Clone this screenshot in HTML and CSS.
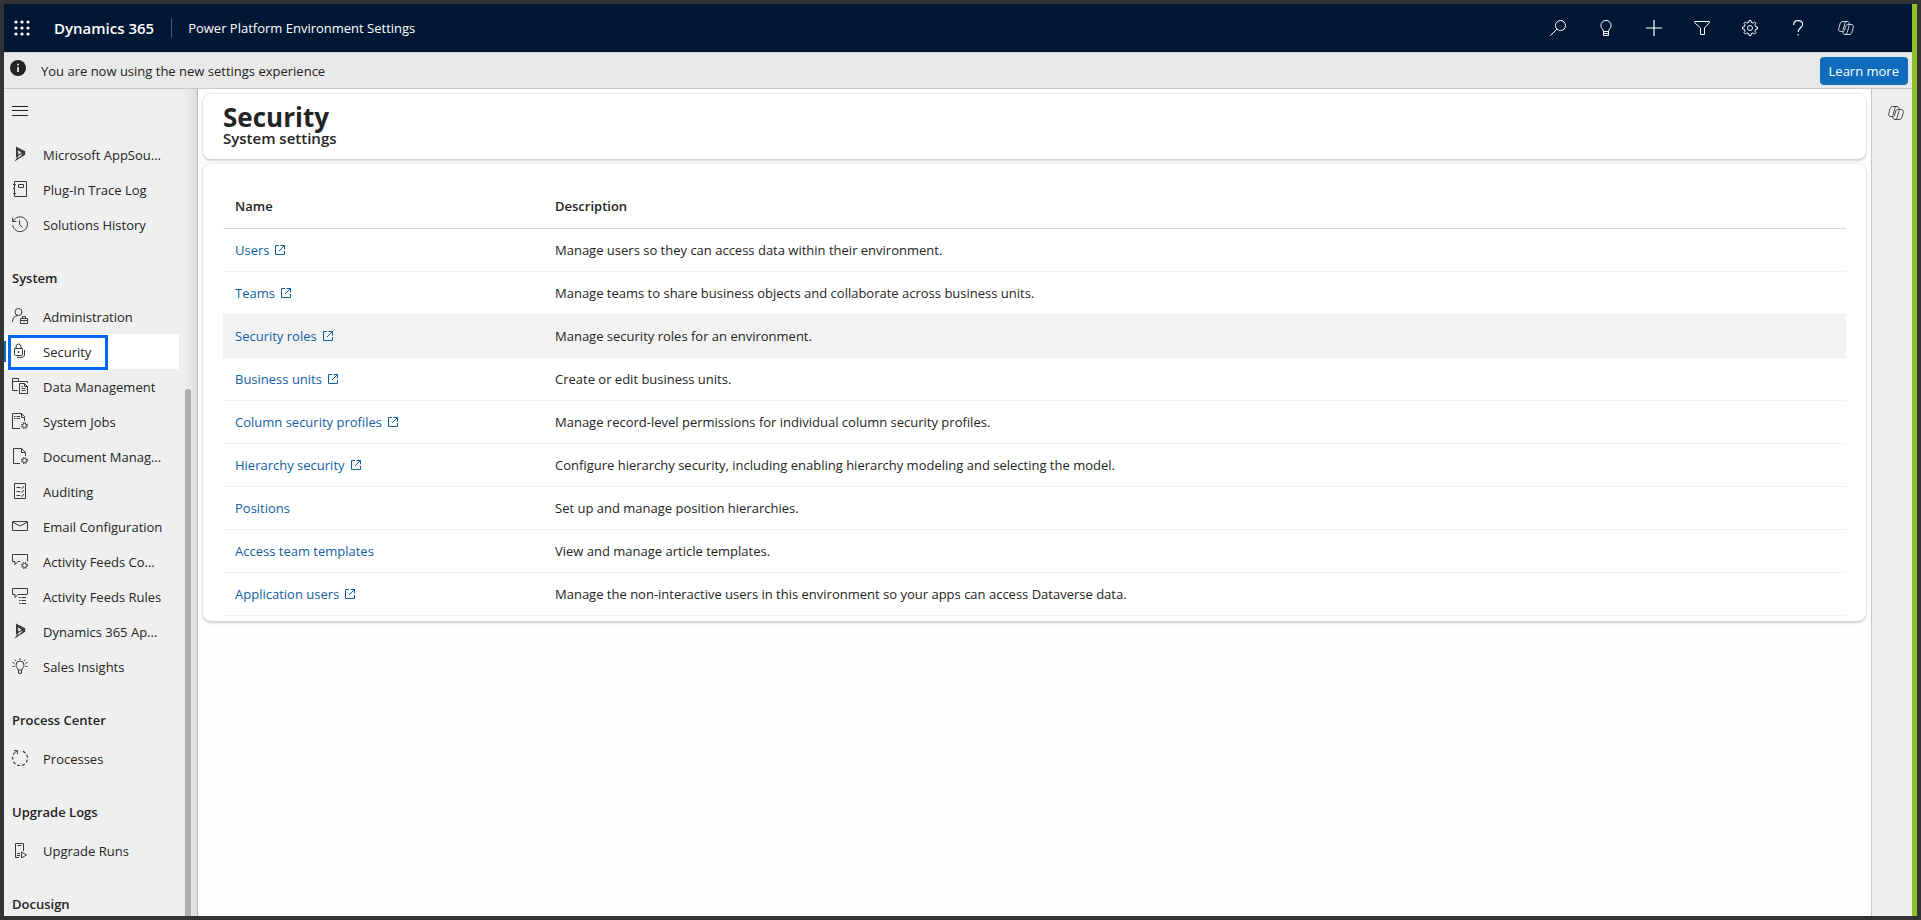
FILE: index.html
```html
<!DOCTYPE html>
<html lang="en">
<head>
<meta charset="utf-8">
<title>Security - Power Platform Environment Settings</title>
<link rel="stylesheet" href="styles.css">
</head>
<body>
<svg class="sprite" aria-hidden="true">
  <symbol id="i-dyn" viewBox="0 0 16 16"><path d="M4 0.5 13.2 5.2V8.8L2.2 15.8 5.500 11 4 11.500Z" fill="currentColor" stroke="none"/><path d="M5.800 4.200 9.600 6.800 6.500 8.600Z" fill="#efefef" stroke="none"/><path d="M5.800 12 6.500 9.800 10.800 7.400 7.800 11Z" fill="#efefef" stroke="none"/></symbol>
  <symbol id="i-log" viewBox="0 0 16 16"><path d="M2.5 .5H14.5V15.5H2.5ZM6.5 3.500H11.500V6.500H6.500ZM1 3.500H4M1 7.500H2.500M1 12.500H4"/></symbol>
  <symbol id="i-history" viewBox="0 0 16 16"><path d="M1.300 5.200A7.400 7.400 0 1 1 .7 9M.6 1.600V5.500H4.500M7.500 4V8.500L10.500 11.300"/></symbol>
  <symbol id="i-admin" viewBox="0 0 16 16"><circle cx="6.500" cy="4" r="3.500"/><path d="M.5 14C.7 10 2.500 7.700 6 7.500M8.500 10.500H15.500V15.500H8.500ZM10.500 10.500V8.500H13.500V10.500M8.500 12.500H15.500M12 12V13.500"/></symbol>
  <symbol id="i-lock" viewBox="0 0 16 16"><path d="M2.500 5.500H10.500V11.500Q10.500 12.500 9.500 12.500H3.500Q2.500 12.500 2.500 11.500ZM4 5.500V4Q4 1 6.500 1T9 4V5.500M12.500 7V12Q12.300 14 10.500 14.300H5"/><circle cx="6.500" cy="9" r="1" fill="currentColor" stroke="none"/></symbol>
  <symbol id="i-data" viewBox="0 0 16 16"><path d="M6 12.500H.5V.5H6.500V3.500H15.500V5M.5 3.500H6.500M7.500 5.500H12.500L15.500 8.500V15.500H7.500ZM12.500 5.500V8.500H15.500M9.500 8.500H11M9.500 10.500H13.500M9.500 12.500H13.500"/></symbol>
  <symbol id="i-gear-s" viewBox="0 0 16 16"><circle cx="12.500" cy="12.500" r="2"/><circle cx="12.500" cy="12.500" r="3" stroke-width="1.200" stroke-dasharray="1.180 1.180"/></symbol>
  <symbol id="i-jobs" viewBox="0 0 16 16"><path d="M8 15.500H.5V.5H9.500L12.500 3.500V8M9.500 .5V4.500H12.500M2 3.500H3.500M4.500 3.500H8M2 5.500H3.500M4.500 5.500H8"/><use href="#i-gear-s"/></symbol>
  <symbol id="i-doc" viewBox="0 0 16 16"><path d="M8 15.500H1.500V.5H9.500L13.500 4.500V8M9.500 .5V4.500H13.500"/><use href="#i-gear-s"/></symbol>
  <symbol id="i-audit" viewBox="0 0 16 16"><path d="M2.500 .5H13.500V15.500H2.500ZM4.500 4.500H8M4.500 8.500H8M4.500 12.500H8M9 4.500 10 5.500 12 3M9 8.500 10 9.500 12 7M9 12.500 10 13.500 12 11"/></symbol>
  <symbol id="i-mail" viewBox="0 0 16 16"><path d="M.5 3.500H15.500V12.500H.5ZM.5 4 8 8 15.500 4"/></symbol>
  <symbol id="i-feedcfg" viewBox="0 0 16 16"><path d="M8 8.500H6L3 11.500V8.500H.5V1.500H15.500V8"/><use href="#i-gear-s"/></symbol>
  <symbol id="i-feedrule" viewBox="0 0 16 16"><path d="M15.500 6V.5H.5V6.500H3V9.500L6 6.500H15.500M7 9.500H8.500M9.500 9.500H14M7 12.500H8.500M9.500 12.500H14M7 15.500H8.500M9.500 15.500H14"/></symbol>
  <symbol id="i-idea" viewBox="0 0 16 16"><path d="M6 12C6 10 4 9.600 4 7A4 4 0 0 1 12 7C12 9.600 10 10 10 12ZM6.500 12V15.300H9.500V12M8 0V2M3 1.500 4 3M13 1.500 12 3M.5 4.500 2.500 5.300M15.500 4.500 13.500 5.300M.5 8.500H2.500M13.500 8.500H15.500"/></symbol>
  <symbol id="i-process" viewBox="0 0 16 16"><path d="M11 1.400A7.400 7.400 0 1 1 2 4" stroke-dasharray="3 2" stroke-width="1.200"/><path d="M1 4 5 .8M2 .6H5.400V4"/></symbol>
  <symbol id="i-upgrade" viewBox="0 0 16 16"><path d="M7 15.500H3.500V1.500H11.500V9M5.500 3.500H9.500M5 11.500H8M5 13.500H8M9.500 10V16L14.500 13Z"/></symbol>
  <symbol id="i-copilot" viewBox="0 0 16 16"><path stroke-width=".8" d="M4.800 11.500H3C1.200 11.500 .3 10.400 .7 8.800L2 3.900C2.500 2.200 3.300 1.500 5 1.500H9C10.400 1.500 10.800 2.300 11.100 3.300L11.400 4.500H13C14.800 4.500 15.700 5.600 15.300 7.200L14 12.100C13.500 13.800 12.700 14.500 11 14.500H7C5.600 14.500 5.200 13.700 4.900 12.700ZM11.400 4.500H9.700C8.700 4.500 8.100 5 7.800 6L6.500 10.200C6.200 11.200 5.600 11.500 4.800 11.500M8.800 1.500C7.600 1.600 7.200 2.200 6.800 3.600L4.900 10.300M7 14.500C8.300 14.400 8.800 13.800 9.200 12.400L11.200 5.300"/></symbol>
  <symbol id="i-open" viewBox="0 0 12 12"><path d="M5 1.500H1.500V10.500H10.500V7M6.500 1.500H10.500V5.500M10.500 1.500 5 7"/></symbol>
</svg>
<div class="app">
  <header class="topbar">
    <button class="icon-btn waffle" aria-label="App launcher"><svg viewBox="0 0 16 16"><g fill="currentColor" stroke="none"><circle cx="2" cy="2" r="1.600"/><circle cx="8" cy="2" r="1.600"/><circle cx="14" cy="2" r="1.600"/><circle cx="2" cy="8" r="1.600"/><circle cx="8" cy="8" r="1.600"/><circle cx="14" cy="8" r="1.600"/><circle cx="2" cy="14" r="1.600"/><circle cx="8" cy="14" r="1.600"/><circle cx="14" cy="14" r="1.600"/></g></svg></button>
    <span class="brand">Dynamics 365</span>
    <span class="app-name">Power Platform Environment Settings</span>
    <div class="actions">
      <button class="icon-btn" aria-label="Search"><svg viewBox="0 0 16 16"><circle cx="10.500" cy="5.500" r="5"/><path d="M7 9 .3 15.700"/></svg></button>
      <button class="icon-btn" aria-label="Ideas"><svg viewBox="0 0 16 16"><path d="M5.500 11.500C5.500 9 2.900 8.500 2.900 5.500A5.100 5.100 0 0 1 13.100 5.500C13.100 8.500 10.500 9 10.500 11.500ZM5.500 11.500V15.500H10.500V11.500M5.500 13.500H10.500"/></svg></button>
      <button class="icon-btn" aria-label="New"><svg viewBox="0 0 16 16"><path d="M8 0V16M0 8H16" stroke-width="1.200"/></svg></button>
      <button class="icon-btn" aria-label="Filter"><svg viewBox="0 0 16 16"><path d="M.5 1.500H15.500V2.500L10.500 8V14.500H6.500V8L.5 2.500Z"/></svg></button>
      <button class="icon-btn" aria-label="Settings"><svg viewBox="0 0 16 16"><circle cx="8" cy="8" r="2.500"/><path d="M6.800 2.300 7 .5H9L9.200 2.300 11.200 3.100 12.600 2 14 3.400 12.900 4.800 13.700 6.800 15.500 7V9L13.700 9.200 12.900 11.200 14 12.600 12.600 14 11.200 12.900 9.200 13.700 9 15.500H7L6.800 13.700 4.800 12.900 3.400 14 2 12.600 3.100 11.200 2.300 9.200 .5 9V7L2.300 6.800 3.100 4.800 2 3.400 3.400 2 4.800 3.100Z"/></svg></button>
      <button class="icon-btn" aria-label="Help"><svg viewBox="0 0 16 16"><path d="M3.700 5C3.700 2 5.300 .6 8 .6S12.600 2.200 12.600 4.500C12.600 7.500 8.200 8 8.200 11.500V12M8.200 14V15.600" stroke-width="1.200"/></svg></button>
      <button class="icon-btn" aria-label="Copilot"><svg><use href="#i-copilot"/></svg></button>
    </div>
  </header>
  <div class="notice">
    <svg class="info" viewBox="0 0 16 16"><circle cx="8" cy="8" r="8" fill="currentColor" stroke="none"/><path d="M8 7V12M8 3.700V5.500" stroke="#fff" stroke-width="1.600"/></svg>
    <span class="notice-text">You are now using the new settings experience</span>
    <button class="learn">Learn more</button>
  </div>
  <div class="body">
    <nav class="sidebar" aria-label="Site map">
      <button class="icon-btn burger" aria-label="Toggle navigation"><svg viewBox="0 0 16 16"><path d="M0 3.500H16M0 7.500H16M0 12.500H16"/></svg></button>
      <ul>
        <li><a href="#"><svg><use href="#i-dyn"/></svg>Microsoft AppSou...</a></li>
        <li><a href="#"><svg><use href="#i-log"/></svg>Plug-In Trace Log</a></li>
        <li><a href="#"><svg><use href="#i-history"/></svg>Solutions History</a></li>
      </ul>
      <h2>System</h2>
      <ul>
        <li><a href="#"><svg><use href="#i-admin"/></svg>Administration</a></li>
        <li><a href="#" class="active" aria-current="page"><svg><use href="#i-lock"/></svg>Security</a></li>
        <li><a href="#"><svg><use href="#i-data"/></svg>Data Management</a></li>
        <li><a href="#"><svg><use href="#i-jobs"/></svg>System Jobs</a></li>
        <li><a href="#"><svg><use href="#i-doc"/></svg>Document Manag...</a></li>
        <li><a href="#"><svg><use href="#i-audit"/></svg>Auditing</a></li>
        <li><a href="#"><svg><use href="#i-mail"/></svg>Email Configuration</a></li>
        <li><a href="#"><svg><use href="#i-feedcfg"/></svg>Activity Feeds Co...</a></li>
        <li><a href="#"><svg><use href="#i-feedrule"/></svg>Activity Feeds Rules</a></li>
        <li><a href="#"><svg><use href="#i-dyn"/></svg>Dynamics 365 Ap...</a></li>
        <li><a href="#"><svg><use href="#i-idea"/></svg>Sales Insights</a></li>
      </ul>
      <h2>Process Center</h2>
      <ul>
        <li><a href="#"><svg><use href="#i-process"/></svg>Processes</a></li>
      </ul>
      <h2>Upgrade Logs</h2>
      <ul>
        <li><a href="#"><svg><use href="#i-upgrade"/></svg>Upgrade Runs</a></li>
      </ul>
      <h2>Docusign</h2>
      <span class="thumb"></span>
    </nav>
    <main>
      <section class="card title-card">
        <h1>Security</h1>
        <p>System settings</p>
      </section>
      <section class="card table-card">
        <table>
          <thead><tr><th scope="col" class="col-name">Name</th><th scope="col">Description</th></tr></thead>
          <tbody>
            <tr><td><a href="#">Users<svg><use href="#i-open"/></svg></a></td><td>Manage users so they can access data within their environment.</td></tr>
            <tr><td><a href="#">Teams<svg><use href="#i-open"/></svg></a></td><td>Manage teams to share business objects and collaborate across business units.</td></tr>
            <tr class="hovered"><td><a href="#">Security roles<svg><use href="#i-open"/></svg></a></td><td>Manage security roles for an environment.</td></tr>
            <tr><td><a href="#">Business units<svg><use href="#i-open"/></svg></a></td><td>Create or edit business units.</td></tr>
            <tr><td><a href="#">Column security profiles<svg><use href="#i-open"/></svg></a></td><td>Manage record-level permissions for individual column security profiles.</td></tr>
            <tr><td><a href="#">Hierarchy security<svg><use href="#i-open"/></svg></a></td><td>Configure hierarchy security, including enabling hierarchy modeling and selecting the model.</td></tr>
            <tr><td><a href="#">Positions</a></td><td>Set up and manage position hierarchies.</td></tr>
            <tr><td><a href="#">Access team templates</a></td><td>View and manage article templates.</td></tr>
            <tr><td><a href="#">Application users<svg><use href="#i-open"/></svg></a></td><td>Manage the non-interactive users in this environment so your apps can access Dataverse data.</td></tr>
          </tbody>
        </table>
      </section>
    </main>
    <aside class="rail"><button class="icon-btn" aria-label="Copilot pane"><svg><use href="#i-copilot"/></svg></button></aside>
  </div>
</div>
</body>
</html>
```
FILE: styles.css
```css
*, *::before, *::after { box-sizing: border-box; }

body {
  margin: 0;
  height: 100vh;
  padding: 4px;
  background: #333;
  color: #242424;
  font: 13px/20px "Open Sans", "Noto Sans", sans-serif;
}

.sprite { position: absolute; width: 0; height: 0; }

svg {
  width: 16px;
  height: 16px;
  flex: none;
  fill: none;
  stroke: currentColor;
  stroke-width: 1;
}

h1, h2, p, ul { margin: 0; padding: 0; }
ul { list-style: none; }
a { text-decoration: none; }
button { font: inherit; cursor: pointer; }

.app {
  display: flex;
  flex-direction: column;
  height: 100%;
  border-right: 5px solid #8cbf26;
  background: #fefefe;
  overflow: hidden;
}

.icon-btn {
  display: flex;
  align-items: center;
  justify-content: center;
  padding: 0;
  border: 0;
  background: none;
  color: inherit;
}

.topbar {
  display: flex;
  flex: none;
  align-items: center;
  height: 48px;
  padding: 0 42px 0 10px;
  background: #001736;
  color: #fff;
}

.waffle { margin-right: 24px; }
.brand { font-size: 15px; font-weight: 600; padding-right: 17px; }
.app-name { padding-left: 16px; border-left: 1px solid #4a5a72; }
.actions { display: flex; margin-left: auto; }
.actions .icon-btn { width: 48px; height: 48px; }

.notice {
  display: flex;
  flex: none;
  align-items: center;
  height: 37px;
  padding: 0 4px 0 6px;
  border-top: 1px solid #c8c8c8;
  border-bottom: 1px solid #c8c8c8;
  background: #e9e9e9;
}

.info { margin: 0 15px 6px 0; }

.learn {
  height: 28px;
  margin-left: auto;
  padding: 0 9px;
  border: 0;
  border-radius: 4px;
  background: #0f6cbd;
  color: #fff;
}

.body { display: flex; flex: 1; min-height: 0; }

.sidebar {
  position: relative;
  flex: none;
  width: 194px;
  overflow: hidden;
  border-right: 1px solid #b8b8b8;
  background: linear-gradient(to left, #dedede, #efefef 14px);
}

.burger { width: 32px; height: 48px; padding: 0 4px 4px; }

.sidebar a {
  position: relative;
  display: flex;
  align-items: center;
  gap: 15px;
  width: 175px;
  height: 35px;
  padding-left: 8px;
  color: #242424;
  white-space: nowrap;
}

.sidebar a svg { color: #3b3a39; }
.sidebar ul svg { margin-bottom: 2px; }
.sidebar .active { background: #fff; }

.sidebar .active::before {
  content: "";
  position: absolute;
  inset: 7px auto 7px 0;
  width: 2px;
  background: #0f6cbd;
}

.sidebar .active::after {
  content: "";
  position: absolute;
  inset: 1px auto -1px 4px;
  width: 100px;
  border: 3px solid #0067f0;
  z-index: 1;
}

.sidebar h2 {
  padding: 15px 8px 0;
  font-size: 13px;
  font-weight: 600;
  line-height: 42px;
}

.thumb {
  position: absolute;
  top: 300px;
  right: 6px;
  bottom: 0;
  width: 6px;
  border-radius: 3px 3px 0 0;
  background: #adadad;
}

main {
  display: flex;
  flex: 1;
  flex-direction: column;
  gap: 5px;
  min-width: 0;
  padding: 5px;
}

.card {
  border-radius: 8px;
  background: #fff;
  box-shadow: 0 0 2px rgba(0, 0, 0, .16), 0 2px 3px rgba(0, 0, 0, .16);
}

.title-card { padding: 10px 20px 13px; }
.title-card h1 { font-size: 26px; font-weight: 700; line-height: 26px; }
.title-card p { font-size: 15px; font-weight: 600; line-height: 16px; }
.table-card { padding: 20px 20px 5px; }

table {
  width: 100%;
  border-collapse: separate;
  border-spacing: 0;
  table-layout: fixed;
  text-align: left;
}

th, td { padding: 0 12px; }
th { height: 45px; border-bottom: 1px solid #d9d9d9; font-weight: 600; }
td { height: 43px; border-bottom: 1px solid #f0f0f0; }
.col-name { width: 320px; }
.hovered td { background: #f3f3f3; }

td a { display: flex; align-items: center; gap: 5px; color: #115ea3; }
td svg { width: 12px; height: 12px; }

.rail {
  flex: none;
  width: 41px;
  border-left: 1px solid #c8c8c8;
  background: #efefef;
}

.rail .icon-btn { width: 40px; height: 48px; padding-left: 8px; }
```
